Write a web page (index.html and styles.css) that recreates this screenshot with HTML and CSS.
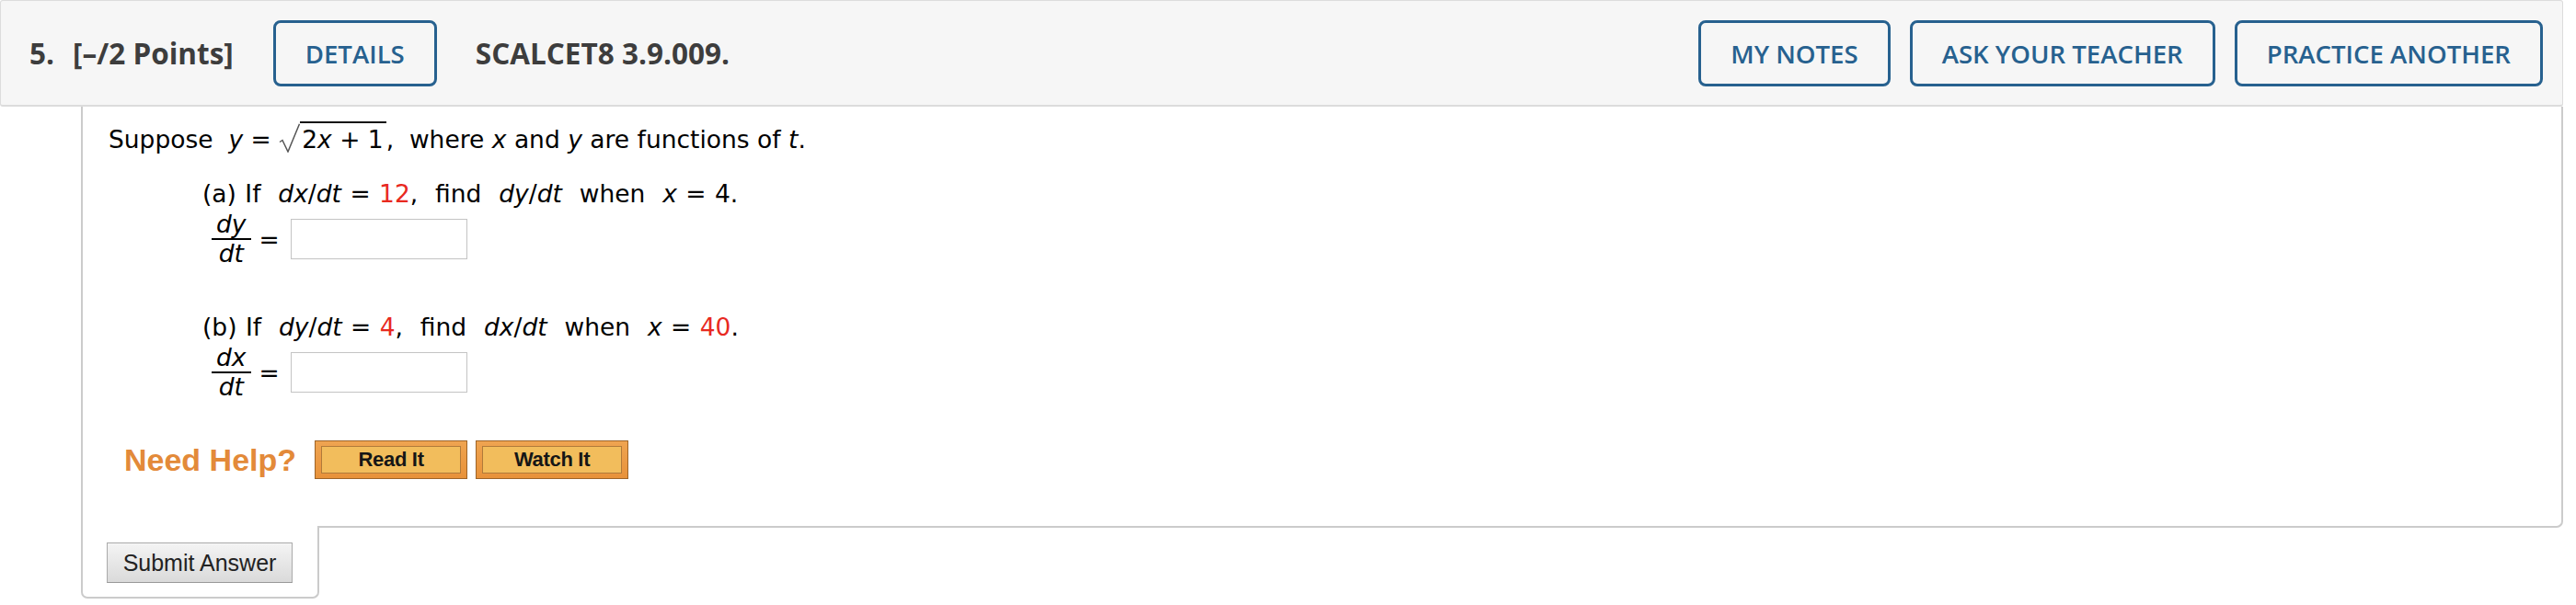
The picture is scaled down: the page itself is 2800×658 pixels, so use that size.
FILE: index.html
```html
<!DOCTYPE html>
<html>
<head>
<meta charset="utf-8">
<link rel="stylesheet" href="styles.css">
</head>
<body>
<div class="page">
  <div class="qhead">
    <span class="qnum">5.</span>
    <span class="qpts">[–/2 Points]</span>
    <button class="hbtn details">DETAILS</button>
    <span class="qcode">SCALCET8 3.9.009.</span>
    <div class="hright">
      <button class="hbtn">MY NOTES</button>
      <button class="hbtn">ASK YOUR TEACHER</button>
      <button class="hbtn">PRACTICE ANOTHER</button>
    </div>
  </div>
  <div class="panel">
    <p class="line intro">Suppose&nbsp; <i>y</i> = <span class="sqrt"><svg class="radical" width="23" height="32" viewBox="0 0 23 32"><path d="M1 20.5 L4 18.5 L10 31 L22.5 0.8" fill="none" stroke="#555" stroke-width="1.5" stroke-linejoin="miter"/></svg><span class="rad">2<i>x</i> + 1</span></span>,&nbsp; where <i>x</i> and <i>y</i> are functions of <i>t</i>.</p>

    <div class="part">
      <p class="line">(a) If&nbsp; <i>dx</i>/<i>dt</i> = <span class="red">12</span>,&nbsp; find&nbsp; <i>dy</i>/<i>dt</i>&nbsp; when&nbsp; <i>x</i> = 4.</p>
      <div class="ans">
        <span class="frac"><span class="num"><i>dy</i></span><span class="den"><i>dt</i></span></span>
        <span class="eq">=</span>
        <input class="box" type="text">
      </div>
    </div>

    <div class="part partb">
      <p class="line">(b) If&nbsp; <i>dy</i>/<i>dt</i> = <span class="red">4</span>,&nbsp; find&nbsp; <i>dx</i>/<i>dt</i>&nbsp; when&nbsp; <i>x</i> = <span class="red">40</span>.</p>
      <div class="ans">
        <span class="frac"><span class="num"><i>dx</i></span><span class="den"><i>dt</i></span></span>
        <span class="eq">=</span>
        <input class="box" type="text">
      </div>
    </div>

    <div class="help">
      <span class="need">Need Help?</span>
      <span class="hb"><span class="hb-in">Read It</span></span>
      <span class="hb"><span class="hb-in">Watch It</span></span>
    </div>
  </div>
  <div class="tab">
    <button class="submit">Submit Answer</button>
  </div>
</div>
</body>
</html>
```

FILE: styles.css
```css
html, body {
  margin: 0;
  padding: 0;
  background: #ffffff;
}

.page {
  width: 2786px;
}

.qhead {
  box-sizing: border-box;
  height: 116px;
  display: flex;
  align-items: center;
  background: #f6f6f6;
  border: 1px solid #dcdcdc;
  border-bottom-width: 2px;
  border-radius: 3px;
  padding: 0 21px 0 31px;
  font-family: "Open Sans", "Liberation Sans", sans-serif;
  color: #3d3d3d;
}

.qnum {
  font-size: 31.5px;
  font-weight: 700;
  margin-right: 20px;
}

.qpts {
  font-size: 31.5px;
  font-weight: 700;
  margin-right: 43px;
}

.qcode {
  font-size: 31.5px;
  font-weight: 700;
  margin-left: 42px;
}

.hbtn {
  box-sizing: border-box;
  height: 72px;
  padding: 0 32px;
  border: 3px solid #27618f;
  border-radius: 8px;
  background: transparent;
  color: #27618f;
  font-family: "Open Sans", "Liberation Sans", sans-serif;
  font-size: 27.6px;
  font-weight: 600;
  white-space: nowrap;
}

.hright {
  margin-left: auto;
  display: flex;
  gap: 21px;
}

.panel {
  margin-left: 88px;
  border: 2px solid #cbcbcb;
  border-top: 0;
  border-bottom-right-radius: 7px;
  padding: 21px 0 51px 28px;
  font-family: "DejaVu Sans", Verdana, sans-serif;
  font-size: 26.5px;
  color: #000;
}

.line {
  margin: 0;
  line-height: 30px;
  white-space: nowrap;
}

.part .line {
  word-spacing: 1px;
}

.red {
  color: #e8291f;
}

.sqrt {
  white-space: nowrap;
}

.radical {
  vertical-align: -5px;
  margin-top: -4px;
}

.rad {
  border-top: 2px solid #111;
  padding: 2px 3px 0 2px;
}

.part {
  margin-left: 102px;
  margin-top: 29px;
}

.partb {
  margin-top: 53px;
}

.ans {
  display: flex;
  align-items: center;
  margin-top: 6px;
}

.frac {
  display: flex;
  flex-direction: column;
  align-items: stretch;
  margin-left: 10px;
  line-height: 24px;
}

.num {
  text-align: center;
  padding: 0 5px 3px;
  border-bottom: 2px solid #000;
}

.den {
  text-align: center;
  padding: 3px 5px 0;
}

.eq {
  margin-left: 9px;
  margin-right: 12px;
}

.box {
  box-sizing: border-box;
  width: 192px;
  height: 44px;
  border: 1.5px solid #c4c4c4;
  margin: 0;
  padding: 0;
  background: #fff;
}

.help {
  display: flex;
  align-items: center;
  margin-top: 46px;
  margin-left: 17px;
}

.need {
  font-family: "Liberation Sans", Arial, sans-serif;
  font-weight: 700;
  font-size: 34px;
  color: #e38a39;
  margin-right: 20px;
}

.hb {
  box-sizing: border-box;
  display: flex;
  width: 166px;
  height: 42px;
  padding: 5px 6px;
  border: 1px solid #9d6428;
  background: linear-gradient(#efa451, #e8923a);
  margin-right: 9px;
}

.hb-in {
  flex: 1;
  display: flex;
  align-items: center;
  justify-content: center;
  border: 1px solid #b07a3a;
  background: #f2bd5c;
  font-family: "Liberation Sans", Arial, sans-serif;
  font-weight: 700;
  font-size: 22px;
  letter-spacing: -0.3px;
  color: #161616;
}

.tab {
  box-sizing: border-box;
  width: 259px;
  margin-left: 88px;
  margin-top: -2px;
  background: #fff;
  border: 2px solid #cbcbcb;
  border-top: 0;
  border-radius: 0 0 7px 7px;
  padding: 18px 0 15px 26px;
}

.submit {
  box-sizing: border-box;
  width: 202px;
  height: 44px;
  border: 1px solid #aaaaaa;
  border-bottom-color: #999;
  background: linear-gradient(#f4f4f4, #dadada);
  font-family: "Liberation Sans", Arial, sans-serif;
  font-size: 25px;
  color: #222;
  padding: 0;
}
```
